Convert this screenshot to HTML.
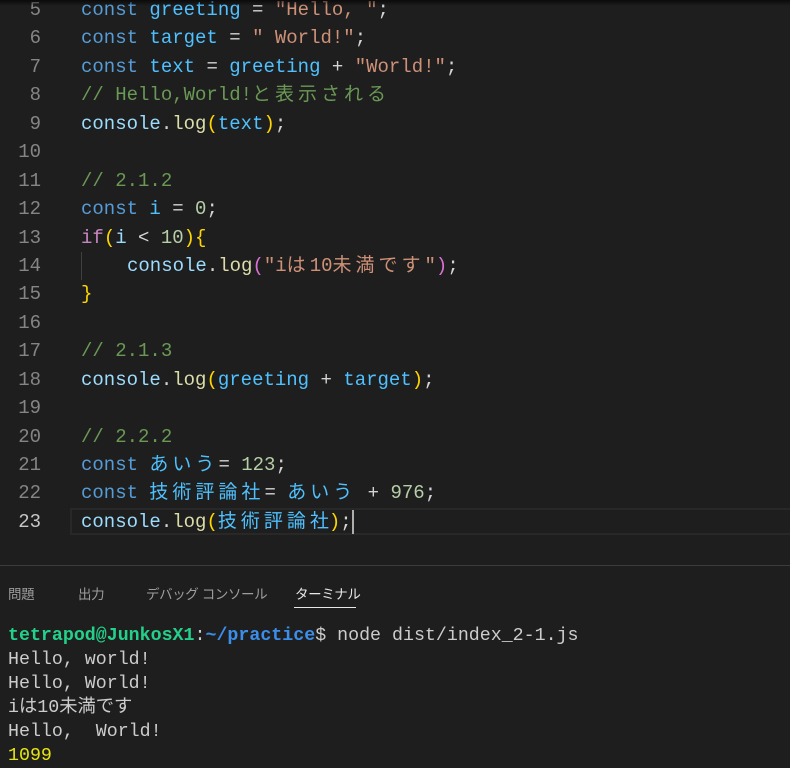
<!DOCTYPE html>
<html><head><meta charset="utf-8"><style>
body{margin:0;width:790px;height:766px;background:#1e1e1e;overflow:hidden;position:relative;font-family:"Liberation Mono","Noto Sans CJK JP",monospace;}
.ed{position:absolute;left:0;top:-4px;width:790px;font-size:19px;line-height:28.44px;}
.l{height:28.44px;white-space:pre;position:relative;}
.n{position:absolute;left:0;width:41px;text-align:right;color:#858585;}
.c{position:absolute;left:81px;}
.j{letter-spacing:4px}
.k{color:#569cd6}.v{color:#4fc1ff}.p{color:#9cdcfe}.s{color:#ce9178}.m{color:#6a9955}.f{color:#dcdcaa}.nu{color:#b5cea8}.y{color:#ffd700}.o{color:#da70d6}.i{color:#c586c0}.w{color:#d4d4d4}
.cur{position:absolute;left:70px;top:508px;width:730px;height:27px;border:2px solid #282828;box-sizing:border-box}
.shadow{position:absolute;left:0;top:0;width:790px;height:6px;background:linear-gradient(#000a,#0000)}
.sep{position:absolute;left:0;top:565px;width:790px;height:1px;background:#3c3c3c}
.tabs{position:absolute;top:583px;font-family:"Liberation Sans","Noto Sans CJK JP",sans-serif;font-size:13.5px;color:#9d9d9d;letter-spacing:-0.4px}
.tabs span{position:absolute;white-space:nowrap}
.term{position:absolute;left:8px;top:624px;font-size:18.3px;line-height:24px;color:#cccccc;white-space:pre}
</style></head><body>
<div class="cur"></div>
<div class="ed">
<div class="l"><span class="n">5</span><span class="c"><span class="k">const</span> <span class="v">greeting</span> <span class="w">=</span> <span class="s">"Hello, "</span><span class="w">;</span></span></div>
<div class="l"><span class="n">6</span><span class="c"><span class="k">const</span> <span class="v">target</span> <span class="w">=</span> <span class="s">" World!"</span><span class="w">;</span></span></div>
<div class="l"><span class="n">7</span><span class="c"><span class="k">const</span> <span class="v">text</span> <span class="w">=</span> <span class="v">greeting</span> <span class="w">+</span> <span class="s">"World!"</span><span class="w">;</span></span></div>
<div class="l"><span class="n">8</span><span class="c m">// Hello,World!<span class="j">と表示される</span></span></div>
<div class="l"><span class="n">9</span><span class="c"><span class="p">console</span><span class="w">.</span><span class="f">log</span><span class="y">(</span><span class="v">text</span><span class="y">)</span><span class="w">;</span></span></div>
<div class="l"><span class="n">10</span></div>
<div class="l"><span class="n">11</span><span class="c m">// 2.1.2</span></div>
<div class="l"><span class="n">12</span><span class="c"><span class="k">const</span> <span class="v">i</span> <span class="w">=</span> <span class="nu">0</span><span class="w">;</span></span></div>
<div class="l"><span class="n">13</span><span class="c"><span class="i">if</span><span class="y">(</span><span class="p">i</span> <span class="w">&lt;</span> <span class="nu">10</span><span class="y">){</span></span></div>
<div class="l"><span class="n">14</span><span style="position:absolute;left:81px;top:0;width:1px;height:28px;background:#404040"></span><span class="c" style="left:127px"><span class="p">console</span><span class="w">.</span><span class="f">log</span><span class="o">(</span><span class="s">"i<span class="j">は</span>10<span class="j">未満です</span>"</span><span class="o">)</span><span class="w">;</span></span></div>
<div class="l"><span class="n">15</span><span class="c y">}</span></div>
<div class="l"><span class="n">16</span></div>
<div class="l"><span class="n">17</span><span class="c m">// 2.1.3</span></div>
<div class="l"><span class="n">18</span><span class="c"><span class="p">console</span><span class="w">.</span><span class="f">log</span><span class="y">(</span><span class="v">greeting</span> <span class="w">+</span> <span class="v">target</span><span class="y">)</span><span class="w">;</span></span></div>
<div class="l"><span class="n">19</span></div>
<div class="l"><span class="n">20</span><span class="c m">// 2.2.2</span></div>
<div class="l"><span class="n">21</span><span class="c"><span class="k">const</span> <span class="v j">あいう</span><span class="w">=</span> <span class="nu">123</span><span class="w">;</span></span></div>
<div class="l"><span class="n">22</span><span class="c"><span class="k">const</span> <span class="v j">技術評論社</span><span class="w">=</span> <span class="v j">あいう</span> <span class="w">+</span> <span class="nu">976</span><span class="w">;</span></span></div>
<div class="l"><span class="n" style="color:#c6c6c6">23</span><span class="c"><span class="p">console</span><span class="w">.</span><span class="f">log</span><span class="y">(</span><span class="v j">技術評論<span style="letter-spacing:0">社</span></span><span class="y">)</span><span class="w">;</span><span style="display:inline-block;width:2px;height:24px;background:#aeafad;vertical-align:middle"></span></span></div>
</div>
<div class="shadow"></div>
<div class="sep"></div>
<div class="tabs">
<span style="left:8px">問題</span><span style="left:78px">出力</span><span style="left:146px">デバッグ コンソール</span><span style="left:295px;color:#e7e7e7">ターミナル</span>
<span style="left:294px;top:24px;width:62px;height:1px;background:#e7e7e7"></span>
</div>
<div class="term"><b style="color:#23d18b">tetrapod@JunkosX1</b>:<b style="color:#3b8eea">~/practice</b>$ node dist/index_2-1.js
Hello, world!
Hello, World!
iは10未満です
Hello,  World!
<span style="color:#e5e510">1099</span></div>
</body></html>
